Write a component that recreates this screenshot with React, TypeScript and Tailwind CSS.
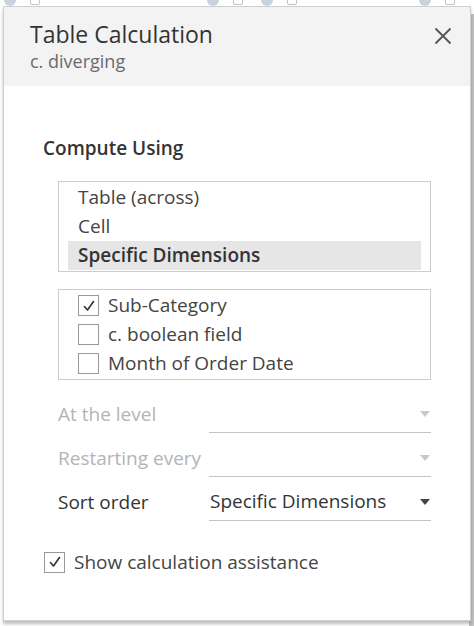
import { useState } from "react"

const font = { fontFamily: "'Open Sans', 'Noto Sans', sans-serif" }

function Check({ checked }: { checked: boolean }) {
  return (
    <span className="flex h-[21px] w-[21px] shrink-0 items-center justify-center border border-[#9a9a9a] bg-white">
      {checked && (
        <svg width="14" height="14" viewBox="0 0 14 14" fill="none">
          <path d="M2.5 7.5 L5.5 11 L11.5 2.5" stroke="#333" strokeWidth="1.6" strokeLinecap="round" strokeLinejoin="round" />
        </svg>
      )}
    </span>
  )
}

function Caret({ dim }: { dim?: boolean }) {
  return (
    <svg width="10" height="6" viewBox="0 0 10 6" className="mr-[1px]">
      <path d="M0 0 H10 L5 6 Z" fill={dim ? "#c9c9c9" : "#444"} />
    </svg>
  )
}

function FieldRow({ label, value, disabled }: { label: string; value?: string; disabled?: boolean }) {
  return (
    <div className="flex h-[44px] items-center">
      <span className={`w-[151px] text-[19px] ${disabled ? "text-[#b4b4b4]" : "text-[#333]"}`}>{label}</span>
      <div className="mt-[3px] flex h-[34px] flex-1 items-center justify-between border-b border-[#c4c4c4] pb-[3px] pl-[1px]">
        <span className="text-[19px] text-[#333]">{value}</span>
        <Caret dim={disabled} />
      </div>
    </div>
  )
}

export default function App() {
  const [dims, setDims] = useState([true, false, false])
  const [assist, setAssist] = useState(true)
  const options = ["Table (across)", "Cell", "Specific Dimensions"]
  const fields = ["Sub-Category", "c. boolean field", "Month of Order Date"]

  return (
    <div className="relative h-[626px] w-[474px] overflow-hidden bg-white" style={font}>
      {/* toolbar peeking out behind the dialog */}
      <div className="absolute left-0 top-0 flex h-[8px] w-full items-start gap-[14px] pl-[4px]">
        {[0, 153, 4, 108].map((gap, i) => (
          <div key={i} className="flex items-start gap-[14px]" style={{ marginLeft: gap }}>
            <span className="-mt-[6px] h-[12px] w-[12px] rounded-full bg-[#c9d3e0]" />
            <span className="-mt-[6px] h-[11px] w-[10px] rounded-[2px] border border-[#c4c4c4]" />
          </div>
        ))}
      </div>
      <div className="absolute bottom-0 right-0 top-[14px] w-[5px] bg-[#c2c2c2]" />

      <div className="relative ml-[3px] mt-[6px] flex h-[615px] w-[468px] flex-col border border-[#cfcfcf] bg-white shadow-[0_3px_3px_rgba(0,0,0,0.25)]">
        <div className="flex h-[79px] justify-between bg-[#f3f3f3] pl-[26px] pr-[18px]">
          <div className="pt-[12px]">
            <div className="text-[23px] leading-[30px] text-[#333]">Table Calculation</div>
            <div className="text-[18px] leading-[24px] text-[#6b6b6b]">c. diverging</div>
          </div>
          <svg width="18" height="18" viewBox="0 0 18 18" className="mt-[20px]">
            <path d="M1.5 1.5 L16.5 16.5 M16.5 1.5 L1.5 16.5" stroke="#555" strokeWidth="1.8" />
          </svg>
        </div>

        <div className="pl-[39px] pt-[50px] text-[#333]">
          <div className="text-[19px] font-semibold leading-[24px]">Compute Using</div>

          <div className="ml-[15px] mt-[21px] w-[373px] border border-[#cdcdcd] px-[9px] py-[1px]">
            {options.map((o, i) => (
              <div
                key={o}
                className={`h-[29px] pl-[10px] text-[19px] leading-[29px] ${i === 2 ? "bg-[#e6e6e6] font-semibold" : "text-[#444]"}`}
              >
                {o}
              </div>
            ))}
          </div>

          <div className="ml-[15px] mt-[17px] w-[373px] border border-[#cdcdcd] px-[19px] py-[1px]">
            {fields.map((f, i) => (
              <label
                key={f}
                className="flex h-[29px] cursor-pointer items-center gap-[9px] text-[19px] text-[#444]"
                onClick={() => setDims(dims.map((d, j) => (j === i ? !d : d)))}
              >
                <Check checked={dims[i]} />
                {f}
              </label>
            ))}
          </div>

          <div className="ml-[15px] mt-[12px] w-[373px]">
            <FieldRow label="At the level" disabled />
            <FieldRow label="Restarting every" disabled />
            <FieldRow label="Sort order" value="Specific Dimensions" />
          </div>

          <label
            className="mt-[24px] flex cursor-pointer items-center gap-[9px] pl-[1px] text-[19px] text-[#444]"
            onClick={() => setAssist(!assist)}
          >
            <Check checked={assist} />
            Show calculation assistance
          </label>
        </div>
      </div>
    </div>
  )
}
